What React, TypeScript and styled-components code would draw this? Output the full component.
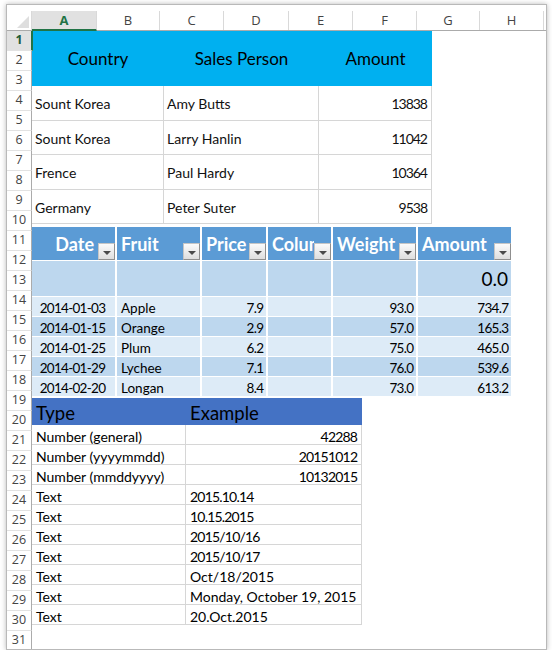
import React from "react";
import styled, { createGlobalStyle, css } from "styled-components";

const Global = createGlobalStyle`
  html, body { margin: 0; padding: 0; background: #ffffff; }
  * { box-sizing: border-box; }
`;

const Window = styled.div`
  margin: 4px 0 0 6px;
  width: 541px;
  height: 646px;
  border: 1px solid #b9b9b9;
  box-shadow: 0 0 5px rgba(0, 0, 0, 0.28);
  background: #ffffff;
  padding-top: 6px;
  overflow: hidden;
  display: flex;
  flex-direction: column;
`;

const HeaderBar = styled.div`
  display: flex;
  height: 20px;
  flex-shrink: 0;
  border-bottom: 1px solid #ababab;
  font-family: "Open Sans", "Noto Sans", sans-serif;
  font-size: 13px;
  color: #444444;
`;

const Corner = styled.div`
  width: 25px;
  flex-shrink: 0;
  display: flex;
  align-items: flex-end;
  justify-content: flex-end;
  padding: 0 2px 2px 0;
  border-right: 1px solid #d9d9d9;
`;

const CornerTriangle = styled.div`
  width: 0;
  height: 0;
  border-left: 12px solid transparent;
  border-bottom: 12px solid #dedede;
`;

const ColHead = styled.div<{ $w: number; $sel?: boolean }>`
  width: ${(p) => p.$w}px;
  flex-shrink: 0;
  display: flex;
  align-items: center;
  justify-content: center;
  border-right: 1px solid #d9d9d9;
  line-height: 1;
  ${(p) =>
    p.$sel &&
    css`
      background: #e1e1e1;
      color: #217346;
      font-weight: 700;
      border-bottom: 2px solid #217346;
      margin-bottom: -1px;
    `}
`;

const Body = styled.div`
  display: flex;
  flex: 1;
  min-height: 0;
`;

const RowHeads = styled.div`
  width: 25px;
  flex-shrink: 0;
  display: flex;
  flex-direction: column;
  font-family: "Open Sans", "Noto Sans", sans-serif;
  font-size: 12.5px;
  color: #444444;
`;

const RowHead = styled.div<{ $sel?: boolean }>`
  height: 20px;
  flex-shrink: 0;
  display: flex;
  align-items: center;
  justify-content: center;
  border-bottom: 1px solid #e2e2e2;
  border-right: 1px solid #ababab;
  line-height: 1;
  ${(p) =>
    p.$sel &&
    css`
      background: #e1e1e1;
      color: #1e5c36;
      font-weight: 700;
      border-right: 2px solid #217346;
      margin-right: -1px;
      position: relative;
    `}
`;

const Sheet = styled.div`
  flex: 1;
  display: flex;
  flex-direction: column;
  align-items: flex-start;
  font-family: Lato, "Open Sans", sans-serif;
  color: #111111;
`;

const Num = styled.span<{ $ls?: number }>`
  letter-spacing: ${(p) => p.$ls ?? -0.8}px;
  margin-right: ${(p) => -(p.$ls ?? -0.8)}px;
`;

/* ---------- Top table ---------- */
const TopTable = styled.div`
  display: grid;
  grid-template-columns: 132px 155px 113px;
  grid-template-rows: 55px 35px 34px 35px 34px;
`;

const TopHead = styled.div`
  background: #00b0f0;
  display: flex;
  align-items: center;
  justify-content: center;
  font-size: 17px;
  color: #000000;
`;

const TopCell = styled.div<{ $right?: boolean }>`
  display: flex;
  align-items: center;
  justify-content: ${(p) => (p.$right ? "flex-end" : "flex-start")};
  padding: 1px 3px 0 3px;
  border-right: 1px solid #d6d6d6;
  border-bottom: 1px solid #d6d6d6;
  font-size: 14px;
  white-space: nowrap;
`;

/* ---------- Middle (Excel table) ---------- */
const MidTable = styled.div`
  margin-top: 3px;
  display: grid;
  grid-template-columns: 83px 83px 64px 63px 83px 93px;
  grid-template-rows: 33px 35px repeat(5, 19px);
  column-gap: 2px;
  row-gap: 1px;
`;

const MidHead = styled.div`
  background: #5b9bd5;
  display: flex;
  align-items: stretch;
  min-width: 0;
  overflow: hidden;
`;

const MidHeadText = styled.span<{ $right?: boolean }>`
  flex: 1;
  min-width: 0;
  overflow: hidden;
  white-space: nowrap;
  display: flex;
  align-items: center;
  justify-content: ${(p) => (p.$right ? "flex-end" : "flex-start")};
  padding: 0 ${(p) => (p.$right ? "4px" : "0")} 0 ${(p) => (p.$right ? "0" : "4px")};
  color: #ffffff;
  font-weight: 700;
  font-size: 18px;
`;

const Drop = styled.div`
  align-self: flex-end;
  flex-shrink: 0;
  width: 17px;
  height: 17px;
  border: 1px solid #a9a9a9;
  border-color: #c6c6c6 #8f8f8f #8f8f8f #c6c6c6;
  background: linear-gradient(#fbfbfb, #dedede);
  display: flex;
  align-items: flex-end;
  justify-content: center;
  padding-bottom: 4px;
`;

const DropArrow = styled.div`
  width: 0;
  height: 0;
  border-left: 4px solid transparent;
  border-right: 4px solid transparent;
  border-top: 4px solid #4a4a4a;
`;

const MidCell = styled.div<{ $dark?: boolean; $right?: boolean; $pr?: number; $big?: boolean }>`
  background: ${(p) => (p.$dark ? "#bdd7ee" : "#ddebf7")};
  display: flex;
  align-items: ${(p) => (p.$big ? "center" : "flex-end")};
  justify-content: ${(p) => (p.$right ? "flex-end" : "flex-start")};
  padding: 0 ${(p) => p.$pr ?? 3}px ${(p) => (p.$big ? "0" : "1px")} 4px;
  font-size: ${(p) => (p.$big ? "19px" : "13.5px")};
  line-height: 1;
  white-space: nowrap;
  color: #000000;
`;

/* ---------- Bottom table ---------- */
const BotTable = styled.div`
  margin-top: 2px;
  display: grid;
  grid-template-columns: 154px 176px;
  grid-template-rows: 27px repeat(10, 20px);
`;

const BotHead = styled.div`
  background: #4472c4;
  display: flex;
  align-items: center;
  padding: 2px 4px 0 4px;
  font-size: 18.5px;
  color: #000000;
`;

const BotCell = styled.div<{ $right?: boolean }>`
  display: flex;
  align-items: center;
  justify-content: ${(p) => (p.$right ? "flex-end" : "flex-start")};
  padding: 3px 3px 0 4px;
  border-right: 1px solid #d6d6d6;
  border-bottom: 1px solid #d6d6d6;
  font-size: 14px;
  white-space: nowrap;
  color: #000000;
`;

const isNum = (s: string) => /^[\d.\-/]+$/.test(s);

const cols = [
  { l: "A", w: 65 },
  { l: "B", w: 63 },
  { l: "C", w: 64 },
  { l: "D", w: 65 },
  { l: "E", w: 64 },
  { l: "F", w: 64 },
  { l: "G", w: 63 },
  { l: "H", w: 64 },
];

const topRows = [
  ["Sount Korea", "Amy Butts", "13838"],
  ["Sount Korea", "Larry Hanlin", "11042"],
  ["Frence", "Paul Hardy", "10364"],
  ["Germany", "Peter Suter", "9538"],
];

const fruitRows = [
  ["2014-01-03", "Apple", "7.9", "", "93.0", "734.7"],
  ["2014-01-15", "Orange", "2.9", "", "57.0", "165.3"],
  ["2014-01-25", "Plum", "6.2", "", "75.0", "465.0"],
  ["2014-01-29", "Lychee", "7.1", "", "76.0", "539.6"],
  ["2014-02-20", "Longan", "8.4", "", "73.0", "613.2"],
];

const midHeads = [
  { t: "Date", right: true },
  { t: "Fruit" },
  { t: "Price" },
  { t: "Column1" },
  { t: "Weight" },
  { t: "Amount" },
];

const botRows: [string, string, boolean][] = [
  ["Number (general)", "42288", true],
  ["Number (yyyymmdd)", "20151012", true],
  ["Number (mmddyyyy)", "10132015", true],
  ["Text", "2015.10.14", false],
  ["Text", "10.15.2015", false],
  ["Text", "2015/10/16", false],
  ["Text", "2015/10/17", false],
  ["Text", "Oct/18/2015", false],
  ["Text", "Monday, October 19, 2015", false],
  ["Text", "20.Oct.2015", false],
];

const fmt = (s: string, ls?: number) => (s && isNum(s) ? <Num $ls={ls}>{s}</Num> : s);

export default function App() {
  return (
    <>
      <Global />
      <Window>
        <HeaderBar>
          <Corner>
            <CornerTriangle />
          </Corner>
          {cols.map((c, i) => (
            <ColHead key={c.l} $w={c.w} $sel={i === 0}>
              {c.l}
            </ColHead>
          ))}
        </HeaderBar>
        <Body>
          <RowHeads>
            {Array.from({ length: 31 }, (_, i) => (
              <RowHead key={i} $sel={i === 0}>
                {i + 1}
              </RowHead>
            ))}
          </RowHeads>
          <Sheet>
            <TopTable>
              <TopHead>Country</TopHead>
              <TopHead>Sales Person</TopHead>
              <TopHead>Amount</TopHead>
              {topRows.map((r, i) => (
                <React.Fragment key={i}>
                  <TopCell>{r[0]}</TopCell>
                  <TopCell>{r[1]}</TopCell>
                  <TopCell $right>{fmt(r[2], -1)}</TopCell>
                </React.Fragment>
              ))}
            </TopTable>

            <MidTable>
              {midHeads.map((h) => (
                <MidHead key={h.t}>
                  <MidHeadText $right={h.right}>{h.t}</MidHeadText>
                  <Drop>
                    <DropArrow />
                  </Drop>
                </MidHead>
              ))}
              {midHeads.map((h, i) => (
                <MidCell key={"t" + i} $dark $right $big>
                  {i === 5 ? "0.0" : ""}
                </MidCell>
              ))}
              {fruitRows.map((r, ri) => (
                <React.Fragment key={ri}>
                  {r.map((v, ci) => (
                    <MidCell
                      key={ci}
                      $dark={ri % 2 === 1}
                      $right={ci !== 1}
                      $pr={ci === 0 ? 9 : 2}
                    >
                      {fmt(v, -0.7)}
                    </MidCell>
                  ))}
                </React.Fragment>
              ))}
            </MidTable>

            <BotTable>
              <BotHead>Type</BotHead>
              <BotHead>Example</BotHead>
              {botRows.map((r, i) => (
                <React.Fragment key={i}>
                  <BotCell>{r[0]}</BotCell>
                  <BotCell $right={r[2]}>{fmt(r[1], -0.8)}</BotCell>
                </React.Fragment>
              ))}
            </BotTable>
          </Sheet>
        </Body>
      </Window>
    </>
  );
}
